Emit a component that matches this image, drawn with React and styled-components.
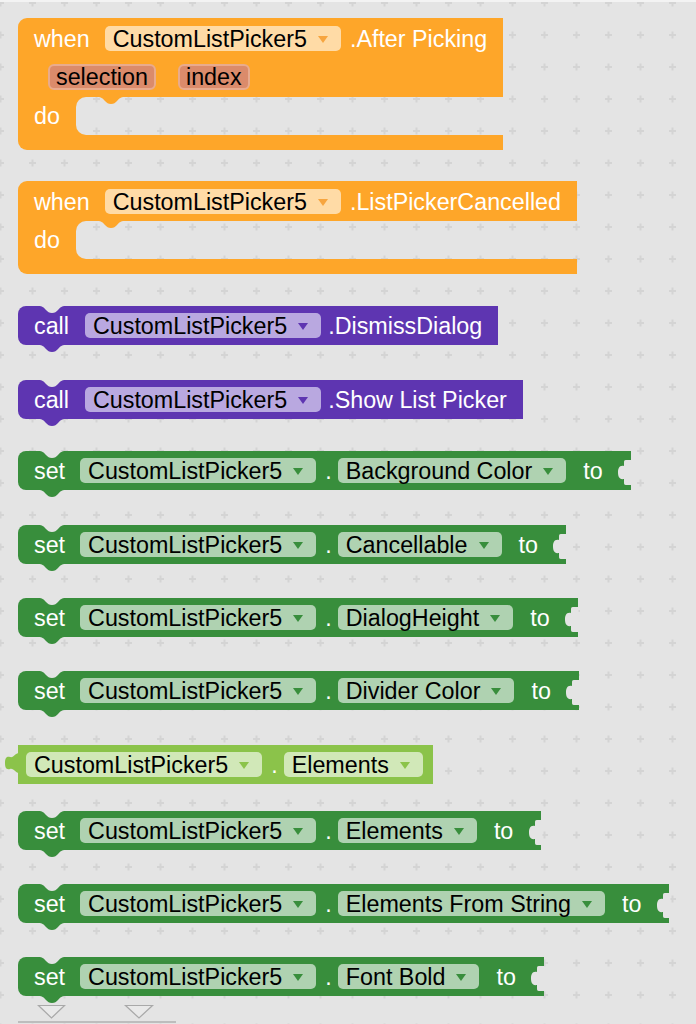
import React from "react";
import styled, { createGlobalStyle, css } from "styled-components";

const BG = "#e4e4e4";

const plusTile = encodeURIComponent(
  "<svg xmlns='http://www.w3.org/2000/svg' width='32' height='32'>" +
    "<rect x='13' y='18' width='7' height='2' fill='#d4d4d4'/>" +
    "<rect x='15.5' y='15.5' width='2' height='7' fill='#d4d4d4'/>" +
    "</svg>"
);

const grid = css`
  background-color: ${BG};
  background-image: url("data:image/svg+xml,${plusTile}");
  background-size: 32px 32px;
  background-position: -16px -16px;
  background-attachment: fixed;
`;

const colors = {
  event: { block: "#fea629", field: "#ffdba6", arrow: "#f7a53f" },
  call: { block: "#5e35b1", field: "#b9a8e0", arrow: "#5e35b1" },
  set: { block: "#388e3c", field: "#afd2b1", arrow: "#388e3c" },
  get: { block: "#8bc34a", field: "#d1e8b8", arrow: "#8bc34a" },
};

const GlobalStyle = createGlobalStyle`
  html, body {
    margin: 0;
    padding: 0;
    background: ${BG};
  }
  body {
    font-family: "Liberation Sans", Arial, sans-serif;
    overflow: hidden;
  }
`;

const Workspace = styled.div`
  ${grid}
  position: relative;
  overflow: hidden;
  box-sizing: border-box;
  min-height: 1024px;
  border-top: 2px solid #f3f3f3;
  padding: 16px 0 0 18px;
  display: flex;
  flex-direction: column;
  align-items: flex-start;
  font-family: "Liberation Sans", Arial, sans-serif;
  font-size: 23.3px;
`;

const Block = styled.div`
  position: relative;
  display: inline-flex;
  align-items: center;
  box-sizing: border-box;
  height: 39px;
  margin-top: ${(p) => p.$mt || 0}px;
  padding: 0 ${(p) => p.$pr}px 0 ${(p) => p.$pl}px;
  background: ${(p) => p.$color};
  border-radius: ${(p) => (p.$output ? "0" : "8px 0 0 8px")};
`;

const Label = styled.span`
  color: #fff;
  line-height: 25px;
  padding-top: 1px;
  white-space: pre;
  margin-left: ${(p) => p.$ml || 0}px;
`;

const Field = styled.span`
  display: inline-flex;
  align-items: center;
  height: 25px;
  padding: 1px 13px 0 8px;
  box-sizing: border-box;
  border-radius: 5px;
  background: ${(p) => p.$bg};
  color: #000;
  white-space: pre;
  margin-left: ${(p) => p.$ml || 0}px;
`;

const Arrow = styled.span`
  width: 0;
  height: 0;
  margin-left: 11px;
  border-left: 5px solid transparent;
  border-right: 5px solid transparent;
  border-top: 7px solid ${(p) => p.$color};
`;

const Shape = styled.svg`
  position: absolute;
  display: block;
  overflow: visible;
`;

const EventBlock = styled.div`
  display: inline-flex;
  flex-direction: column;
  margin-top: ${(p) => p.$mt || 0}px;
`;

const EventHead = styled.div`
  display: flex;
  flex-direction: column;
  gap: 13px;
  padding: 8px 16px 7px 16px;
  background: ${colors.event.block};
  border-radius: 9px 0 0 0;
`;

const Row = styled.div`
  display: flex;
  align-items: center;
  height: 25px;
`;

const Params = styled.div`
  display: flex;
  align-items: center;
  gap: 22px;
  height: 26px;
  padding-left: 14px;
`;

const Chip = styled.span`
  display: inline-flex;
  align-items: center;
  box-sizing: border-box;
  height: 26px;
  padding: 1px 6px 0;
  border: 2px solid #e9ab8d;
  border-radius: 6px;
  background: #db8b6b;
  color: #000;
`;

const EventMid = styled.div`
  display: flex;
  height: 38px;
  background: ${colors.event.block};
`;

const DoArm = styled.div`
  width: 58px;
  box-sizing: border-box;
  padding: 1px 0 0 16px;
  display: flex;
  align-items: center;
  color: #fff;
`;

const Hole = styled.div`
  ${grid}
  position: relative;
  flex: 1;
  border-radius: 10px 0 0 10px;
`;

const EventFoot = styled.div`
  height: 15px;
  background: ${colors.event.block};
  border-radius: 0 0 0 9px;
`;

const notchPath =
  "M0,0 C5,0 6,2 8,4 C10,6 11,7 14,7 C17,7 18,6 20,4 C22,2 23,0 28,0 Z";

function Notch({ fill, top, left = 20 }) {
  return (
    <Shape width="28" height="7" viewBox="0 0 28 7" style={{ left, top }}>
      <path d={notchPath} fill={fill} />
    </Shape>
  );
}

function Socket() {
  return (
    <Shape width="14" height="25" viewBox="0 0 14 25" style={{ right: -0.5, top: 9 }}>
      <path
        d="M14.5,0 L9,0 C7,0 7,1 7,3 L7,6 C2,5 1,9 1,12.5 C1,16 2,20 7,19 L7,22 C7,24 7,25 9,25 L14.5,25 Z"
        fill={BG}
      />
    </Shape>
  );
}

function OutputTab({ fill }) {
  return (
    <Shape width="14" height="20" viewBox="0 0 14 20" style={{ left: -13, top: 8 }}>
      <path
        d="M14,0 L14,20 C10,20 9,15 5,16 C1,17 0,14 0,10 C0,6 1,3 5,4 C9,5 10,0 14,0 Z"
        fill={fill}
      />
    </Shape>
  );
}

function Dropdown({ theme, ml, children }) {
  return (
    <Field $bg={theme.field} $ml={ml}>
      {children}
      <Arrow $color={theme.arrow} />
    </Field>
  );
}

function StackBlock({ theme, mt, pl = 16, pr, children, socket }) {
  return (
    <Block $color={theme.block} $mt={mt} $pl={pl} $pr={pr}>
      <Notch fill={BG} top={-0.5} />
      {children}
      {socket && <Socket />}
      <Notch fill={theme.block} top="calc(100% - 0.5px)" />
    </Block>
  );
}

function EventHandler({ mt, event, params }) {
  const t = colors.event;
  return (
    <EventBlock $mt={mt}>
      <EventHead>
        <Row>
          <Label>when</Label>
          <Dropdown theme={t} ml={15}>
            CustomListPicker5
          </Dropdown>
          <Label $ml={9}>{event}</Label>
        </Row>
        {params && (
          <Params>
            {params.map((p) => (
              <Chip key={p}>{p}</Chip>
            ))}
          </Params>
        )}
      </EventHead>
      <EventMid>
        <DoArm>do</DoArm>
        <Hole>
          <Notch fill={t.block} top={-0.5} left={21} />
        </Hole>
      </EventMid>
      <EventFoot />
    </EventBlock>
  );
}

function CallBlock({ mt, method }) {
  const t = colors.call;
  return (
    <StackBlock theme={t} mt={mt} pr={16}>
      <Label>call</Label>
      <Dropdown theme={t} ml={16}>
        CustomListPicker5
      </Dropdown>
      <Label $ml={7}>{method}</Label>
    </StackBlock>
  );
}

function SetBlock({ mt, prop }) {
  const t = colors.set;
  return (
    <StackBlock theme={t} mt={mt} pr={28} socket>
      <Label>set</Label>
      <Dropdown theme={t} ml={15}>
        CustomListPicker5
      </Dropdown>
      <Label $ml={9}>.</Label>
      <Dropdown theme={t} ml={6}>
        {prop}
      </Dropdown>
      <Label $ml={17}>to</Label>
    </StackBlock>
  );
}

function GetBlock({ mt, prop }) {
  const t = colors.get;
  return (
    <Block $color={t.block} $mt={mt} $pl={8} $pr={10} $output>
      <OutputTab fill={t.block} />
      <Dropdown theme={t}>CustomListPicker5</Dropdown>
      <Label $ml={9}>.</Label>
      <Dropdown theme={t} ml={6}>
        {prop}
      </Dropdown>
    </Block>
  );
}

const Marker = styled.svg`
  position: absolute;
  left: 0;
  top: 998px;
  pointer-events: none;
`;

export default function App() {
  return (
    <>
      <GlobalStyle />
      <Workspace>
        <EventHandler event=".After Picking" params={["selection", "index"]} />
        <EventHandler mt={31} event=".ListPickerCancelled" />
        <CallBlock mt={32} method=".DismissDialog" />
        <CallBlock mt={35} method=".Show List Picker" />
        <SetBlock mt={32} prop="Background Color" />
        <SetBlock mt={35} prop="Cancellable" />
        <SetBlock mt={34} prop="DialogHeight" />
        <SetBlock mt={34} prop="Divider Color" />
        <GetBlock mt={35} prop="Elements" />
        <SetBlock mt={27} prop="Elements" />
        <SetBlock mt={34} prop="Elements From String" />
        <SetBlock mt={34} prop="Font Bold" />
        <Marker width="200" height="26" viewBox="0 0 200 26">
          <polygon points="38.5,5.5 64.5,5.5 51.5,18" fill="#e9e9e9" stroke="#a9a9a9" strokeWidth="1.2" />
          <polygon points="125.5,5.5 152.5,5.5 139,18" fill="#e9e9e9" stroke="#a9a9a9" strokeWidth="1.2" />
          <rect x="18" y="21" width="158" height="2" fill="#bdbdbd" />
        </Marker>
      </Workspace>
    </>
  );
}
